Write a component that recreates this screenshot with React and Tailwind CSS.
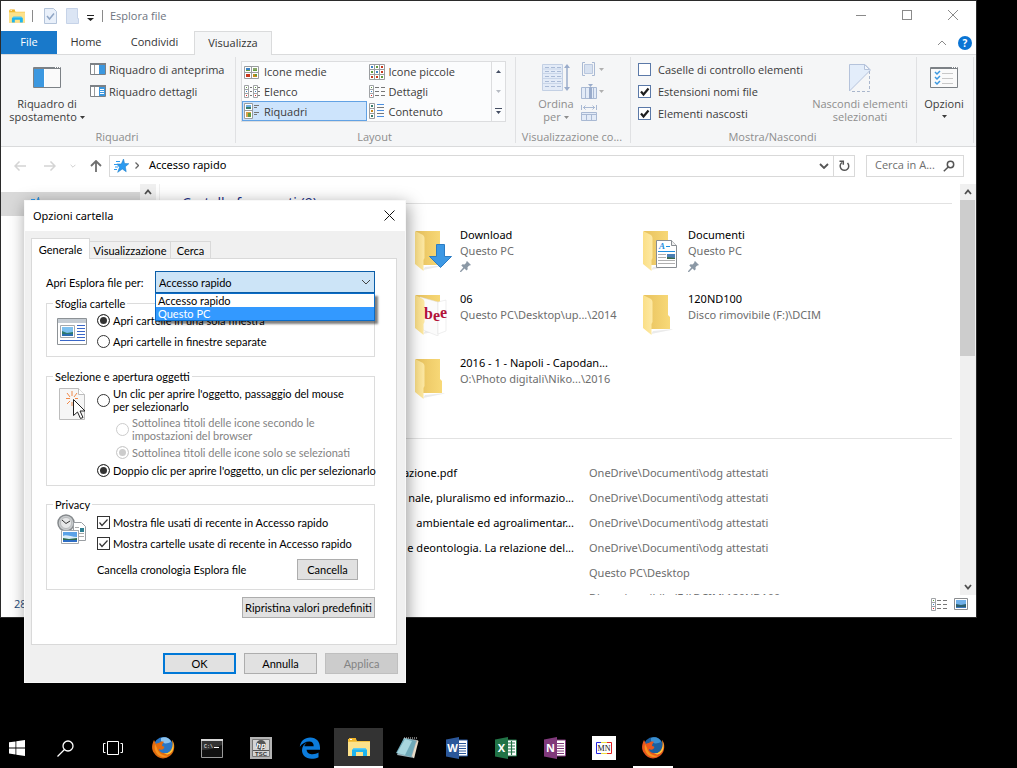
import { useState } from 'react'
import clsx from 'clsx'

const UI = "font-['Open_Sans','Noto_Sans',sans-serif]"
const FILES = "font-['Noto_Sans','Open_Sans',sans-serif]"
const DIALOG = "font-['Lato','Liberation_Sans',sans-serif]"

const GALLERY = [
  { id: 'medie', label: 'Icone medie' },
  { id: 'piccole', label: 'Icone piccole' },
  { id: 'elenco', label: 'Elenco' },
  { id: 'dettagli', label: 'Dettagli' },
  { id: 'riquadri', label: 'Riquadri' },
  { id: 'contenuto', label: 'Contenuto' },
]

const FOLDERS = [
  { name: 'Download', path: 'Questo PC', pinned: true, overlay: 'download' },
  { name: 'Documenti', path: 'Questo PC', pinned: true, overlay: 'document' },
  { name: '06', path: 'Questo PC\\Desktop\\up...\\2014', overlay: 'bee' },
  { name: '120ND100', path: 'Disco rimovibile (F:)\\DCIM' },
  { name: '2016 - 1 - Napoli - Capodan...', path: 'O:\\Photo digitali\\Niko...\\2016' },
]

const RECENT = [
  { name: 'azione.pdf', path: 'OneDrive\\Documenti\\odg attestati', short: true },
  { name: 'nale, pluralismo ed informazio...', path: 'OneDrive\\Documenti\\odg attestati' },
  { name: 'ambientale ed agroalimentar...', path: 'OneDrive\\Documenti\\odg attestati' },
  { name: 'e deontologia. La relazione del...', path: 'OneDrive\\Documenti\\odg attestati' },
  { name: '', path: 'Questo PC\\Desktop' },
  { name: '', path: 'Disco rimovibile (F:)\\DCIM\\120ND100' },
]

/* ---------- icons ---------- */

function ExplorerIcon({ className }) {
  return (
    <svg viewBox="0 0 22 18" className={className} aria-hidden="true">
      <path d="M0 1h8l1 2h13v15H0z" fill="#f5c342" />
      <path d="M1 0h7v3H1z" fill="#f0b429" />
      <path d="M2 1h2v1H2z" fill="#fff" />
      <path d="M0 4h22v14H0z" fill="#fde28b" />
      <path d="M4 18v-6l2-2h11l2 2v6h-4v-4H8v4z" fill="#1fb5ee" />
      <path d="M6 10h11l1.5 1.500H4.500z" fill="#5ccbf5" />
    </svg>
  )
}

function Caret({ className }) {
  return (
    <svg viewBox="0 0 5 3" className={clsx('inline-block h-[3px] w-[5px]', className)} fill="currentColor" aria-hidden="true">
      <path d="M0 0h5L2.500 3z" />
    </svg>
  )
}

function Chevron({ className, up }) {
  return (
    <svg viewBox="0 0 10 6" className={className} fill="none" stroke="currentColor" aria-hidden="true">
      <path d={up ? 'M1 5l4-4 4 4' : 'M1 1l4 4 4-4'} />
    </svg>
  )
}

function NavPaneIcon() {
  return (
    <svg viewBox="0 0 28 21" className="h-[21px] w-7" aria-hidden="true">
      <path d="M.5.5h27v20H.5z" fill="#fafafa" stroke="#7c8186" />
      <path d="M1 0h26v2H1z" fill="#7c8186" />
      <path d="M22 .5h1M24 .5h1M26 .5h1" stroke="#fff" />
      <path d="M1 2h10v18H1z" fill="#3c98e0" />
      <path d="M11 2h1v18h-1z" fill="#fff" />
    </svg>
  )
}

function SmallPaneIcon({ details }) {
  return (
    <svg viewBox="0 0 16 12" className="h-3 w-4 shrink-0" aria-hidden="true">
      <path d="M.5.5h15v11H.5z" fill="#fff" stroke="#7c8186" />
      <path d="M0 0h16v2H0z" fill="#7c8186" />
      <path d="M4.500 2v9" stroke="#9a9da0" />
      <path d="M9 2h6v9H9z" fill="#3c98e0" />
      {details && <path d="M10 4.500h4M10 6.500h4M10 8.500h4" stroke="#fff" />}
    </svg>
  )
}

function GalleryIcon({ id }) {
  const common = { viewBox: '0 0 16 16', className: 'h-4 w-4 shrink-0', fill: 'none', 'aria-hidden': true }
  if (id === 'medie') {
    return (
      <svg {...common}>
        <path d="M.5 2.500h14v12H.5zM7.500 2.500v12M.5 8.500h14" fill="#fff" stroke="#9a9da0" />
        <path d="M2 4h4v3H2z" fill="#3b82c4" />
        <path d="M2 6h4v1H2zM9 6h4v1H9z" fill="#5f9a3f" />
        <path d="M9 4h4v2H9z" fill="#88a86a" />
        <path d="M2 10h4v3H2z" fill="#c8381e" />
        <path d="M9 10h4v3H9z" fill="#c98a1e" />
        <path d="M11 10h2v2h-2z" fill="#5f9a3f" />
      </svg>
    )
  }
  if (id === 'piccole') {
    return (
      <svg {...common}>
        <path d="M.5.5h15v15H.5zM5.500.5v15M10.500.5v15M.5 5.500h15M.5 10.500h15" fill="#fff" stroke="#9a9da0" />
        <path d="M2 2h2v2H2zM7 7h2v2H7z" fill="#3b82c4" />
        <path d="M7 2h2v2H7zM2 7h2v2H2zM12 12h2v2h-2z" fill="#5f9a3f" />
        <path d="M12 2h2v2h-2zM12 7h2v2h-2zM2 12h2v2H2zM7 12h2v2H7z" fill="#c8381e" />
      </svg>
    )
  }
  if (id === 'elenco') {
    return (
      <svg {...common}>
        <path d="M.5 2.500h4v12h-4zM9.500 2.500h4v12h-4zM.5 6.500h4M.5 10.500h4M9.500 6.500h4M9.500 10.500h4" fill="#fff" stroke="#a0a3a6" />
        <path d="M6 4.500h2M6 8.500h2M6 12.500h2M14 4.500h2M14 8.500h2M14 12.500h2" stroke="#777" />
        <path d="M2 4h1v1H2zM11 4h1v1h-1z" fill="#5f9a3f" />
        <path d="M2 8h1v1H2zM11 8h1v1h-1z" fill="#3b82c4" />
        <path d="M2 12h1v1H2zM11 12h1v1h-1z" fill="#e02020" />
      </svg>
    )
  }
  if (id === 'dettagli') {
    return (
      <svg {...common}>
        <path d="M.5 2.500h4v12h-4zM.5 6.500h4M.5 10.500h4" fill="#fff" stroke="#a0a3a6" />
        <path d="M6 4.500h4M6 8.500h4M6 12.500h4M12 4.500h4M12 8.500h4M12 12.500h4" stroke="#777" />
        <path d="M2 4h1v1H2z" fill="#5f9a3f" />
        <path d="M2 8h1v1H2z" fill="#3b82c4" />
        <path d="M2 12h1v1H2z" fill="#e02020" />
      </svg>
    )
  }
  if (id === 'riquadri') {
    return (
      <svg {...common}>
        <path d="M.5.5h8v15h-8zM.5 7.500h8" fill="#fff" stroke="#9a9da0" />
        <path d="M2 2h5v4H2z" fill="#6db0e6" />
        <path d="M2 4h5v2H2z" fill="#3a7d6a" />
        <path d="M2 9h5v5H2z" fill="#d9a24a" />
        <path d="M4 10h3v4H4z" fill="#5f9a3f" />
        <path d="M10 2.500h5M10 4.500h3M10 9.500h5M10 11.500h3" stroke="#777" />
      </svg>
    )
  }
  return (
    <svg {...common}>
      <path d="M.5.5h5v15h-5zM.5 5.500h5M.5 10.500h5" fill="#fff" stroke="#9a9da0" />
      <path d="M2 2h2v2H2zM2 12h2v2H2z" fill="#3a7d6a" />
      <path d="M2 7h2v2H2z" fill="#c98a1e" />
      <path d="M8 1.500h7M8 7.500h7M8 13.500h7" stroke="#4a8fe0" />
      <path d="M8 4.500h7M8 10.500h7" stroke="#777" />
    </svg>
  )
}

function SortIcon() {
  return (
    <svg viewBox="0 0 28 28" className="h-7 w-7" fill="none" aria-hidden="true">
      <path d="M.5.5h20v26H.5z" fill="#e3ebf7" stroke="#c3d0e4" />
      <path d="M1 5h19M1 9.500h19M1 14.500h19M1 19.500h19" stroke="#c9d6e9" />
      <path d="M3 3.500h16M3 7.500h16M3 12.500h16M3 17.500h16M3 22.500h16" stroke="#a9bad6" strokeDasharray="4 2" />
      <path d="M25 2v23" stroke="#9aaccb" strokeWidth="1.500" />
      <path d="M22 4l3-4 3 4zM22 23l3 4 3-4z" fill="#9aaccb" />
    </svg>
  )
}

function GroupByIcon() {
  return (
    <svg viewBox="0 0 16 14" className="h-3.5 w-4" fill="none" aria-hidden="true">
      <path d="M4 .5H1.500v13H4M11 .5h2.500v13H11" stroke="#a9b9d3" />
      <path d="M3.500 2.500h8v9h-8z" fill="#d7e1f0" stroke="#b9c7de" />
    </svg>
  )
}

function AddColumnsIcon() {
  return (
    <svg viewBox="0 0 16 15" className="h-[15px] w-4" fill="none" aria-hidden="true">
      <path d="M.5 3.500h15v11H.5zM4.500 3.500v11M12.500 3.500v11" fill="#e3ebf7" stroke="#a9b9d3" />
      <path d="M8 3h3v12H8z" fill="#9aaccb" />
      <path d="M7 0h5L9.500 3z" fill="#9aaccb" />
    </svg>
  )
}

function FitColumnsIcon() {
  return (
    <svg viewBox="0 0 16 16" className="h-4 w-4" fill="none" stroke="#a9b9d3" aria-hidden="true">
      <path d="M.5 0v5M15.500 0v5M2 2.500h12M4.500.5l-2 2 2 2M11.500.5l2 2-2 2" />
      <path d="M.5 7.500h15v8H.5zM.5 9.500h15M5.500 9.500v6M10.500 9.500v6" fill="#e3ebf7" />
    </svg>
  )
}

function HideItemsIcon() {
  return (
    <svg viewBox="0 0 22 28" className="h-7 w-[22px]" fill="none" aria-hidden="true">
      <path d="M.5.5H16l5 5v1L.5 27z" fill="#e3edfa" stroke="#b5c3db" />
      <path d="M15.500.5v5h5z" fill="#f3f7fc" stroke="#b5c3db" />
      <path d="M20.500 7v20.500H1" stroke="#a9b6cc" strokeDasharray="3 2" />
    </svg>
  )
}

function OptionsIcon() {
  return (
    <svg viewBox="0 0 28 21" className="h-[21px] w-7" fill="none" aria-hidden="true">
      <path d="M.5.5h27v20H.5z" fill="#fafafa" stroke="#7c8186" />
      <path d="M1 0h26v2H1z" fill="#7c8186" />
      <path d="M22 .5h1M24 .5h1M26 .5h1" stroke="#fff" />
      <path d="M5 5l2 2 3-3M5 10l2 2 3-3M5 15l2 2 3-3" stroke="#3c98e0" strokeWidth="1.500" />
      <path d="M12 6.500h11M12 11.500h11M12 16.500h11" stroke="#c8c8c8" />
    </svg>
  )
}

function StarIcon({ className }) {
  return (
    <svg viewBox="0 0 15 14" className={className} aria-hidden="true">
      <path d="M9.500 0l1 4.500 4.300.2-3.500 3 .9 5L8.300 10l-4.600 3.300 1.800-5L2.800 5h4.500z" fill="#2b9af0" stroke="#1c80cc" strokeWidth=".6" />
      <path d="M2 2.500h4M0 5.500h3M1 8h3M0 10.500h3" stroke="#2b9af0" fill="none" />
    </svg>
  )
}

function PinIcon() {
  return (
    <svg viewBox="0 0 11 11" className="h-[11px] w-[11px]" fill="#8b98a5" aria-hidden="true">
      <path d="M7 0l4 4-1.200.6-.6-.1-1.700 1.800.2 2-1.200 1.200-2-2L1 11l-1 0 .2-1L3.300 6.500l-2-2 1.200-1.200 2 .3L6.300 1.800l-.1-.7z" />
    </svg>
  )
}

function FolderIcon({ overlay }) {
  return (
    <svg viewBox="0 0 38 42" className="h-[42px] w-[38px] shrink-0" aria-hidden="true">
      <defs>
        <linearGradient id="folderBack" x1="0" x2="1">
          <stop offset="0" stopColor="#e8c25e" />
          <stop offset="1" stopColor="#f8d978" />
        </linearGradient>
        <linearGradient id="folderFlap" x1="0" x2="1">
          <stop offset="0" stopColor="#fbdf86" />
          <stop offset="1" stopColor="#fde9a5" />
        </linearGradient>
      </defs>
      <path d="M8 40l20-4 2-1-20 2z" fill="#000" opacity=".08" />
      <path d="M1 1h24v20l2 2v12H1z" fill="url(#folderBack)" />
      {overlay === 'bee' && (
        <>
          <path d="M5 3l18 5v34L8 36z" fill="#fbfbfb" stroke="#dedede" strokeWidth=".5" />
          <path d="M23 8l8-2v31l-8 3z" fill="#fff" stroke="#dedede" strokeWidth=".5" />
        </>
      )}
      <path d="M0 1l8 4c1 1 1.500 2 1.500 3v20l-1 2v11L0 34z" fill="url(#folderFlap)" />
      {overlay === 'bee' && (
        <text x="9" y="25" fontSize="16" fontWeight="700" fill="#b3123a" fontFamily="Liberation Serif, serif">
          b<tspan dy="2">e</tspan><tspan dy="-3">e</tspan>
        </text>
      )}
      {overlay === 'download' && (
        <path d="M21.500 14.500h8v12h7L25.500 37.500 14.500 26.500h7z" fill="#3c98e4" stroke="#2b7cc4" />
      )}
      {overlay === 'document' && (
        <>
          <path d="M13.500 10.500h15l5 5v22h-20z" fill="#fff" stroke="#888d92" />
          <path d="M28.500 10.500v5h5" fill="#eee" stroke="#888d92" />
          <text x="16" y="19" fontSize="9" fontStyle="italic" fontWeight="700" fill="#1f8fe0" fontFamily="Liberation Serif, serif">A</text>
          <path d="M23 16.500h4M15 21.500h17" stroke="#1f8fe0" />
          <path d="M15 24.500h8M15 27.500h8M15 30.500h17M15 33.500h17" stroke="#b0b0b0" />
          <path d="M24 24h8v5h-8z" fill="#4a7fb5" />
          <path d="M24 27l8 1v1h-8z" fill="#3d6b4a" />
        </>
      )}
    </svg>
  )
}

/* ---------- explorer window ---------- */

function TitleBar() {
  return (
    <header className="flex h-[30px] items-center pl-2">
      <ExplorerIcon className="h-3.5 w-4" />
      <span className="ml-[7px] h-3 w-px bg-[#8a8a8a]" />
      <button type="button" aria-label="Proprietà" className="ml-[11px]">
        <svg viewBox="0 0 13 16" className="h-4 w-[13px]" fill="none" aria-hidden="true">
          <path d="M.5.5h9l3 3v12H.5z" fill="#e9f0fa" stroke="#b4c4da" />
          <path d="M3 8l2.500 3L10 5.500" stroke="#8fa5c4" strokeWidth="1.500" />
        </svg>
      </button>
      <button type="button" aria-label="Nuova cartella" className="ml-[9px]">
        <svg viewBox="0 0 13 16" className="h-4 w-[13px]" aria-hidden="true">
          <path d="M.5.5h11v10h1v5H.5z" fill="#dbe5f4" stroke="#c6d3e8" />
        </svg>
      </button>
      <button type="button" aria-label="Personalizza barra di accesso rapido" className="ml-2 pt-1">
        <svg viewBox="0 0 7 6" className="h-1.5 w-[7px]" aria-hidden="true">
          <path d="M0 0h7v1H0zM0 3h7L3.500 6z" fill="#222" />
        </svg>
      </button>
      <span className="ml-2 h-3 w-px bg-[#8a8a8a]" />
      <h1 className="ml-[7px] text-[11px] text-[#6d7480]">Esplora file</h1>
      <div className="ml-auto flex items-center gap-9 pr-[18px] pb-0.5 text-[#8a8a8a]">
        <button type="button" aria-label="Riduci a icona" className="flex h-3 w-2.5 items-center">
          <span className="h-px w-full bg-current" />
        </button>
        <button type="button" aria-label="Ingrandisci" className="h-2.5 w-2.5 border border-current" />
        <button type="button" aria-label="Chiudi">
          <svg viewBox="0 0 10 10" className="h-2.5 w-2.5" stroke="currentColor" aria-hidden="true">
            <path d="M0 0l10 10M10 0L0 10" />
          </svg>
        </button>
      </div>
    </header>
  )
}

function RibbonTabs() {
  return (
    <nav className="flex h-6 items-stretch border-b border-[#dadbdc] text-[11px] text-[#333]">
      <button type="button" className="w-14 bg-[#1979ca] text-white">File</button>
      <button type="button" className="w-[58px]">Home</button>
      <button type="button" className="w-[79px]">Condividi</button>
      <button type="button" className="-mb-px w-[78px] border border-b-0 border-[#dadbdc] bg-[#f5f6f7]">Visualizza</button>
      <div className="ml-auto flex items-center gap-[11px] pr-1">
        <button type="button" aria-label="Riduci barra multifunzione">
          <Chevron up className="h-1.5 w-2.5 text-[#8a8a8a]" />
        </button>
        <button type="button" aria-label="Guida" className="flex h-3.5 w-3.5 items-center justify-center rounded-full bg-[#0a74d4] text-[10px] leading-none font-bold text-white">
          ?
        </button>
      </div>
    </nav>
  )
}

function RibbonGroup({ label, className, children }) {
  return (
    <section className={clsx('flex shrink-0 flex-col border-r border-[#e0e1e3]', className)}>
      <div className="flex flex-1">{children}</div>
      <h2 className="h-[13px] pr-0.5 text-center text-[11px] leading-[13px] text-[#8d8d8d]">{label}</h2>
    </section>
  )
}

function RibbonCheck({ label, defaultChecked }) {
  return (
    <label className="flex h-[22px] items-center gap-[7px]">
      <span className="relative h-[13px] w-[13px]">
        <input type="checkbox" defaultChecked={defaultChecked} className="peer block h-[13px] w-[13px] appearance-none border border-[#5b79a8] bg-white" />
        <svg viewBox="0 0 13 13" className="pointer-events-none absolute inset-0 hidden h-[13px] w-[13px] peer-checked:block" fill="none" stroke="#1e1e1e" strokeWidth="2.200" aria-hidden="true">
          <path d="M3 6.500l2.500 3 5-6" />
        </svg>
      </span>
      {label}
    </label>
  )
}

function Ribbon() {
  const [view, setView] = useState('riquadri')

  return (
    <div className="flex h-[92px] overflow-hidden border-b border-[#dadbdc] bg-[#f5f6f7] pt-0.5 pb-[3px] text-[11px] leading-[13px] text-[#3b3b3b]">
      <RibbonGroup label="Riquadri" className="w-[235px]">
        <button type="button" className="mt-2.5 ml-1.5 flex w-20 flex-col items-center self-start">
          <NavPaneIcon />
          <span className="mt-[9px]">Riquadro di<br />spostamento <Caret className="mb-0.5" /></span>
        </button>
        <div className="mt-px ml-[3px] flex flex-col">
          <button type="button" className="flex h-[22px] items-center gap-[3px]"><SmallPaneIcon />Riquadro di anteprima</button>
          <button type="button" className="flex h-[22px] items-center gap-[3px]"><SmallPaneIcon details />Riquadro dettagli</button>
        </div>
      </RibbonGroup>

      <RibbonGroup label="Layout" className="w-[280px]">
        <div className="mt-1 ml-[5px] flex h-[61px] w-[265px] border border-[#dcdddf] bg-[#fbfcfd]">
          <div className="grid flex-1 grid-cols-2 grid-rows-3">
            {GALLERY.map((item) => (
              <button
                key={item.id}
                type="button"
                onClick={() => setView(item.id)}
                className={clsx(
                  'flex items-center gap-1 border pl-px',
                  view === item.id ? 'border-[#62a2e4] bg-[#cde4fc]' : 'border-transparent'
                )}
              >
                <GalleryIcon id={item.id} />
                {item.label}
              </button>
            ))}
          </div>
          <div className="flex w-3.5 flex-col items-center border-l border-[#dcdddf]">
            <button type="button" aria-label="Su" className="flex flex-1 items-center"><Caret className="rotate-180 text-[#444e63]" /></button>
            <button type="button" aria-label="Giù" className="flex flex-1 items-center"><Caret className="text-[#b5bac2]" /></button>
            <button type="button" aria-label="Altro" className="flex flex-1 items-center">
              <svg viewBox="0 0 7 6" className="h-1.5 w-[7px]" aria-hidden="true">
                <path d="M0 0h7v1H0zM1 3h5L3.500 6z" fill="#444e63" />
              </svg>
            </button>
          </div>
        </div>
      </RibbonGroup>

      <RibbonGroup label="Visualizzazione co..." className="w-[115px]">
        <button type="button" disabled className="mt-[7px] ml-5 flex w-10 flex-col items-center self-start text-[#8d8d8d]">
          <SortIcon />
          <span className="mt-[5px]">Ordina<br />per <Caret className="mb-0.5" /></span>
        </button>
        <div className="mt-px ml-[5px] flex flex-col text-[#b0b0b0]">
          <button type="button" disabled aria-label="Raggruppa per" className="flex h-[22px] items-center gap-0.5"><GroupByIcon /><Caret /></button>
          <button type="button" disabled aria-label="Aggiungi colonne" className="flex h-[22px] items-center gap-0.5"><AddColumnsIcon /><Caret /></button>
          <button type="button" disabled aria-label="Adatta colonne" className="flex h-[22px] items-center"><FitColumnsIcon /></button>
        </div>
      </RibbonGroup>

      <RibbonGroup label="Mostra/Nascondi" className="w-[286px]">
        <div className="mt-px ml-[7px] flex flex-col">
          <RibbonCheck label="Caselle di controllo elementi" />
          <RibbonCheck label="Estensioni nomi file" defaultChecked />
          <RibbonCheck label="Elementi nascosti" defaultChecked />
        </div>
        <button type="button" disabled className="mt-[7px] mr-[5px] ml-auto flex w-[102px] flex-col items-center self-start text-[#8d8d8d]">
          <HideItemsIcon />
          <span className="mt-[5px]">Nascondi elementi<br />selezionati</span>
        </button>
      </RibbonGroup>

      <RibbonGroup className="w-[57px]">
        <button type="button" className="mt-2.5 flex w-full flex-col items-center self-start pr-0.5">
          <OptionsIcon />
          <span className="mt-[9px]">Opzioni</span>
          <Caret className="mt-[5px]" />
        </button>
      </RibbonGroup>
    </div>
  )
}

function AddressRow() {
  return (
    <div className="flex h-[37px] items-center pr-3 pl-[13px] text-[11px]">
      <button type="button" disabled aria-label="Indietro" className="text-[#d4d4d4]">
        <svg viewBox="0 0 12 10" className="h-2.5 w-3" fill="none" stroke="currentColor" strokeWidth="1.500" aria-hidden="true"><path d="M12 5H1M5.500.5L1 5l4.500 4.500" /></svg>
      </button>
      <button type="button" disabled aria-label="Avanti" className="ml-[18px] text-[#d4d4d4]">
        <svg viewBox="0 0 12 10" className="h-2.5 w-3" fill="none" stroke="currentColor" strokeWidth="1.500" aria-hidden="true"><path d="M0 5h11M6.500.5L11 5 6.500 9.500" /></svg>
      </button>
      <button type="button" disabled aria-label="Percorsi recenti" className="ml-3.5 text-[#b0b0b0]">
        <Chevron className="h-1 w-1.5" />
      </button>
      <button type="button" aria-label="Su" className="ml-3.5 text-[#6f6f6f]">
        <svg viewBox="0 0 12 12" className="h-3 w-3" fill="none" stroke="currentColor" strokeWidth="1.800" aria-hidden="true"><path d="M6 12V1.500M1 6l5-5 5 5" /></svg>
      </button>
      <div className="ml-[7px] flex h-[22px] flex-1 items-center border border-[#d9d9d9] pl-1">
        <StarIcon className="h-3.5 w-[15px]" />
        <svg viewBox="0 0 4 7" className="ml-1.5 h-[7px] w-1" fill="none" stroke="#666" strokeWidth="1.300" aria-hidden="true"><path d="M.5.5l3 3-3 3" /></svg>
        <span className={clsx('ml-2.5 text-black', FILES)}>Accesso rapido</span>
        <button type="button" aria-label="Percorsi precedenti" className="mr-1 ml-auto text-[#555]">
          <svg viewBox="0 0 10 6" className="h-1.5 w-2.5" fill="none" stroke="currentColor" strokeWidth="1.800" aria-hidden="true"><path d="M1 1l4 4 4-4" /></svg>
        </button>
        <button type="button" aria-label="Aggiorna" className="flex h-full w-[21px] items-center justify-center border-l border-[#d9d9d9] text-[#555]">
          <svg viewBox="0 0 11 12" className="h-3 w-[11px]" fill="none" stroke="currentColor" strokeWidth="1.500" aria-hidden="true"><path d="M3 2.500A4.300 4.300 0 1 0 8.500 3M0.500 1.200h3.800v3.600" /></svg>
        </button>
      </div>
      <div className="ml-[11px] flex h-[22px] w-[98px] items-center border border-[#d9d9d9] pl-2">
        <input type="text" aria-label="Cerca in Accesso rapido" placeholder="Cerca in A..." className="w-[68px] outline-none placeholder:text-[#6d6d6d]" />
        <svg viewBox="0 0 12 12" className="h-3 w-3" fill="none" stroke="#555" strokeWidth="1.500" aria-hidden="true"><circle cx="7.500" cy="4.500" r="3.200" /><path d="M5.200 7L.8 11.200" /></svg>
      </div>
    </div>
  )
}

function ScrollArrow({ up }) {
  return (
    <span className="flex h-4 w-4 items-center justify-center text-[#505050]">
      <svg viewBox="0 0 8 6" className="h-1.5 w-2" fill="none" stroke="currentColor" strokeWidth="1.800" aria-hidden="true">
        <path d={up ? 'M1 5l3-3.500L7 5' : 'M1 1l3 3.500L7 1'} />
      </svg>
    </span>
  )
}

function FileArea() {
  return (
    <div className="flex min-h-0 flex-1">
      <aside className="flex w-[159px] shrink-0 border-r border-[#f0f0f0]">
        <div className="flex-1 pt-2">
          <a href="#accesso" className="flex h-6 items-center gap-0.5 bg-[#d9d9d9] pl-7 text-[11px] text-black">
            <StarIcon className="h-3.5 w-[15px]" />
            Accesso rapido
          </a>
        </div>
        <div className="mr-[3px] w-4 bg-[#f0f0f0]"><ScrollArrow up /></div>
      </aside>

      <main className={clsx('min-w-0 flex-1 overflow-hidden text-[11px] leading-4', FILES)}>
        <div className="flex items-center gap-1.5 pt-2 pr-2 pl-1.5">
          <Chevron className="h-1.5 w-2.5 text-[#555]" />
          <h2 className="text-[14px] leading-[22px] text-[#1e3287]">Cartelle frequenti (9)</h2>
          <span className="h-px flex-1 bg-[#e2e2e2]" />
        </div>
        <ul className="grid grid-cols-[228px_228px] pt-[13px] pl-[255px]">
          {FOLDERS.map((folder) => (
            <li key={folder.name} className="flex h-16 items-start gap-[7px]">
              <div className="pt-[3px]"><FolderIcon overlay={folder.overlay} /></div>
              <div className="min-w-0 whitespace-nowrap">
                <p className="text-black">{folder.name}</p>
                <p className="text-[#6d6d6d]">{folder.path}</p>
                {folder.pinned && <div className="pt-0.5"><PinIcon /></div>}
              </div>
            </li>
          ))}
        </ul>
        <div className="mt-[19px] mr-2 h-px bg-[#e2e2e2]" />
        <ul className="pt-[21px]">
          {RECENT.map((file, i) => (
            <li key={i} className="flex h-[25px] items-center whitespace-nowrap">
              <span className={clsx('flex w-[414px] shrink-0 justify-end text-black', file.short && 'pr-[117px]')}>{file.name}</span>
              <span className="pl-[15px] text-[#6d6d6d]">{file.path}</span>
            </li>
          ))}
        </ul>
      </main>

      <div className="flex w-4 shrink-0 flex-col bg-[#f0f0f0]">
        <ScrollArrow up />
        <span className="h-[38%] w-[15px] bg-[#cdcdcd]" />
        <span className="mt-auto"><ScrollArrow /></span>
      </div>
    </div>
  )
}

function StatusBar() {
  return (
    <footer className="flex h-[22px] items-center pr-2 pb-1 pl-[13px] text-[11px] text-[#1e4a7a]">
      28 elementi
      <div className="ml-auto flex items-center gap-[7px]">
        <button type="button" aria-label="Dettagli"><GalleryIcon id="dettagli" /></button>
        <button type="button" aria-label="Icone grandi">
          <svg viewBox="0 0 14 12" className="h-3 w-3.5" aria-hidden="true">
            <path d="M.5.5h13v11H.5z" fill="#fff" stroke="#8a8d90" />
            <path d="M2 2h10v8H2z" fill="#6fb0ea" />
            <path d="M2 6l5 1 5-1v4H2z" fill="#2c5f6e" />
            <path d="M2 9h10v1H2z" fill="#3c78c0" />
          </svg>
        </button>
      </div>
    </footer>
  )
}

/* ---------- folder options dialog ---------- */

function Radio({ label, className, ...props }) {
  return (
    <label className={clsx('flex items-center gap-[3px]', props.disabled && 'text-[#838383]', className)}>
      <input
        type="radio"
        className="h-[13px] w-[13px] shrink-0 appearance-none rounded-full border border-[#333] bg-white checked:bg-[#333] checked:shadow-[inset_0_0_0_2px_#fff] disabled:border-[#ccc] disabled:checked:bg-[#ccc]"
        {...props}
      />
      <span>{label}</span>
    </label>
  )
}

function Check({ label, className }) {
  return (
    <label className={clsx('flex items-center gap-[3px]', className)}>
      <span className="relative h-[13px] w-[13px]">
        <input type="checkbox" defaultChecked className="peer block h-[13px] w-[13px] appearance-none border border-[#333] bg-white" />
        <svg viewBox="0 0 13 13" className="pointer-events-none absolute inset-0 hidden h-[13px] w-[13px] peer-checked:block" fill="none" stroke="#333" strokeWidth="1.200" aria-hidden="true">
          <path d="M2.500 6.500L5 9.500l5.500-6" />
        </svg>
      </span>
      {label}
    </label>
  )
}

function Group({ title, className, children }) {
  return (
    <fieldset className={clsx('min-w-0 border border-[#dcdcdc]', className)}>
      <legend className="ml-1.5 px-0.5">{title}</legend>
      {children}
    </fieldset>
  )
}

function DialogButton({ className, children, ...props }) {
  return (
    <button
      type="button"
      className={clsx('h-[21px] border disabled:border-[#bfbfbf] disabled:bg-[#ccc] disabled:text-[#838383]', className)}
      {...props}
    >
      {children}
    </button>
  )
}

function BrowseIcon() {
  return (
    <svg viewBox="0 0 30 27" className="h-[27px] w-[30px]" aria-hidden="true">
      <path d="M.5.5h29v26H.5z" fill="#fff" stroke="#8d9296" />
      <path d="M1 1h28v4H1z" fill="#c5ccd3" />
      <path d="M3.500 7.500h14v12h-14z" fill="#fff" stroke="#a5a9ad" />
      <path d="M5 9h11v9H5z" fill="#7dc0ef" />
      <path d="M5 13l5 2 6-1v4H5z" fill="#2e7a6e" />
      <path d="M5 16h11v2H5z" fill="#2a6db0" />
      <path d="M20 7.500h8M20 10.500h8M20 13.500h8M20 16.500h8M20 19.500h8M3 22.500h25" stroke="#3a67c8" />
    </svg>
  )
}

function ClickIcon() {
  return (
    <svg viewBox="0 0 28 33" className="h-[33px] w-7" aria-hidden="true">
      <path d="M.5.5h19l6 6v25H.5z" fill="#f6f6f6" stroke="#bdbdbd" />
      <path d="M19.500.5v6h6" fill="#fff" stroke="#bdbdbd" />
      <path d="M13 3v5M8 5l3 4M18 5l-3 4M7 10.500h4M8 16l3-3M13 14v4M19 10.500h-3" stroke="#f08a4b" fill="none" />
      <path d="M14.500 11.500v16l4-3.500 3 6.500 2.500-1-3-6.500h5z" fill="#fff" stroke="#222" />
    </svg>
  )
}

function PrivacyIcon() {
  return (
    <svg viewBox="0 0 29 31" className="h-[31px] w-[29px]" aria-hidden="true">
      <circle cx="9" cy="9" r="8" fill="#c8cbcd" stroke="#85898c" strokeWidth="1.500" />
      <circle cx="9" cy="9" r="5.500" fill="#e6e7e8" stroke="#a3a6a8" strokeWidth=".6" />
      <path d="M5 6l4 3.500L13 7" stroke="#333" fill="none" />
      <path d="M16.500 8.500h8l4 4v14h-12z" fill="#fff" stroke="#9a9ea2" />
      <path d="M18 13.500h4M18 16.500h4M18 19.500h9M22 22.500h5" stroke="#aaa" />
      <path d="M23 14h4v4h-4z" fill="#2d7f92" />
      <path d="M4.500 16.500h17v13h-17z" fill="#fff" stroke="#a5a9ad" />
      <path d="M6 18h14v10H6z" fill="#5aa2e8" />
      <path d="M6 22c3-2 8 1 14 1v2H6z" fill="#d8ecfa" />
      <path d="M6 24l6 1 8-1v2H6z" fill="#2f6b4f" />
      <path d="M6 26h14v2H6z" fill="#2d6dc4" />
    </svg>
  )
}

function FolderOptions() {
  return (
    <div
      role="dialog"
      aria-labelledby="dialog-title"
      className={clsx('absolute top-[200px] left-6 w-[382px] border border-[#f8f8f8] bg-[#f0f0f0] text-[11px] leading-[13px] text-black shadow-[2px_4px_16px_rgba(0,0,0,0.4)]', DIALOG)}
    >
      <div className="flex h-[30px] items-center justify-between bg-white pr-2.5 pb-0.5 pl-2">
        <h2 id="dialog-title" className={FILES}>Opzioni cartella</h2>
        <button type="button" aria-label="Chiudi">
          <svg viewBox="0 0 11 11" className="h-[11px] w-[11px]" stroke="#111" aria-hidden="true">
            <path d="M.5.5l10 10M10.500.5l-10 10" />
          </svg>
        </button>
      </div>

      <div className="flex items-end pt-[7px] pl-1.5" role="tablist">
        <button type="button" role="tab" aria-selected="true" className="relative -mb-px h-[21px] w-[59px] border border-b-0 border-[#d9d9d9] bg-white">Generale</button>
        <button type="button" role="tab" aria-selected="false" className="h-[17px] w-[81px] border border-b-0 border-l-0 border-[#d9d9d9]">Visualizzazione</button>
        <button type="button" role="tab" aria-selected="false" className="h-[17px] w-10 border border-b-0 border-l-0 border-[#d9d9d9]">Cerca</button>
      </div>

      <div className="mx-1.5 mr-2 flex flex-col border border-[#d9d9d9] bg-white pt-3 pr-[21px] pb-[26px] pl-3.5">
        <div className="relative flex items-center justify-between">
          <label htmlFor="open-to">Apri Esplora file per:</label>
          <div className="relative">
            <select id="open-to" className="block h-[22px] w-[220px] appearance-none border border-[#0a5da8] bg-[#cce4f7] pl-[3px]">
              <option>Accesso rapido</option>
              <option>Questo PC</option>
            </select>
            <Chevron className="pointer-events-none absolute top-2 right-1 h-1.5 w-2.5 text-[#444]" />
            <ul role="listbox" aria-label="Apri Esplora file per" className="absolute top-full left-0 z-10 w-full border border-[#0a6cc8] bg-white shadow-[3px_3px_2px_rgba(0,0,0,0.5)]">
              <li role="option" aria-selected="false" className="h-[13px] pl-0.5">Accesso rapido</li>
              <li role="option" aria-selected="true" className="h-[13px] bg-[#3399ff] pl-0.5 text-white">Questo PC</li>
            </ul>
          </div>
        </div>

        <Group title="Sfoglia cartelle" className="mt-1">
          <div className="flex gap-2.5 pb-1 pl-2.5">
            <div className="pt-2"><BrowseIcon /></div>
            <div>
              <Radio name="browse" defaultChecked label="Apri cartelle in una sola finestra" className="h-[21px]" />
              <Radio name="browse" label="Apri cartelle in finestre separate" className="h-[21px]" />
            </div>
          </div>
        </Group>

        <Group title="Selezione e apertura oggetti" className="mt-[13px]">
          <div className="flex pb-2 pl-3">
            <div className="w-[38px] shrink-0 pt-[5px]"><ClickIcon /></div>
            <div className="pt-1 whitespace-nowrap">
              <Radio name="click" label={<>Un clic per aprire l'oggetto, passaggio del mouse<br />per selezionarlo</>} />
              <div className="ml-[19px] pt-[3px]">
                <Radio name="underline" disabled label={<>Sottolinea titoli delle icone secondo le<br />impostazioni del browser</>} />
                <Radio name="underline" disabled defaultChecked label="Sottolinea titoli delle icone solo se selezionati" className="mt-1" />
              </div>
              <Radio name="click" defaultChecked label="Doppio clic per aprire l'oggetto, un clic per selezionarlo" className="mt-[5px]" />
            </div>
          </div>
        </Group>

        <Group title="Privacy" className="mt-3">
          <div className="flex gap-[11px] pt-px pr-4 pb-[9px] pl-2.5">
            <div className="pt-0.5"><PrivacyIcon /></div>
            <div className="flex-1">
              <Check label="Mostra file usati di recente in Accesso rapido" className="h-[21px]" />
              <Check label="Mostra cartelle usate di recente in Accesso rapido" className="h-[21px]" />
              <div className="flex items-center justify-between pt-[5px]">
                <span>Cancella cronologia Esplora file</span>
                <DialogButton className="w-[61px] border-[#adadad] bg-[#e1e1e1]">Cancella</DialogButton>
              </div>
            </div>
          </div>
        </Group>

        <DialogButton className="mt-[7px] w-[133px] self-end border-[#adadad] bg-[#e1e1e1]">Ripristina valori predefiniti</DialogButton>
      </div>

      <div className="flex justify-end gap-2 pt-2 pr-[7px] pb-2">
        <DialogButton className="w-[73px] border-2 border-[#0078d7] bg-[#e1e1e1]">OK</DialogButton>
        <DialogButton className="w-[73px] border-[#adadad] bg-[#e1e1e1]">Annulla</DialogButton>
        <DialogButton disabled className="w-[73px]">Applica</DialogButton>
      </div>
    </div>
  )
}

/* ---------- taskbar ---------- */

function FirefoxIcon({ modern }) {
  return (
    <svg viewBox="0 0 24 24" className="h-6 w-6" aria-hidden="true">
      <circle cx="12.500" cy="11" r="10" fill={modern ? '#1d5f9e' : '#2a76c4'} />
      <path d="M10 2c4-2 9 0 10 4-3 1-7 3-10-1z" fill={modern ? '#3a8fd0' : '#8cc3ee'} />
      <path d="M3 4c-2 4-3 9 0 13 3 5 9 7 14 4 5-2 7-8 6-13-.5-2-1-3-2-4 1 3 1 6 0 8-1 4-5 6-8 5-3 0-5-2-5-4 2 1 4 1 5-1 1-1 0-2-2-2 0-2 1-3 2-4-2-1-4 0-5 1-1 0-2 0-3 1z" fill={modern ? '#e8561e' : '#e06a10'} />
      <path d="M21 4c1 3 1 6 0 8-1 4-5 6-8 5 3 3 7 1 9-3 1-3 1-7-1-10z" fill="#ffc83a" />
      <path d="M4 8c-1 4 0 8 3 11 3 2 7 3 10 1-5 0-10-3-11-8z" fill="#f7931e" />
    </svg>
  )
}

function OfficeIcon({ letter, color, kind }) {
  return (
    <svg viewBox="0 0 22 22" className="h-[22px] w-[22px]" aria-hidden="true">
      <path d="M12 3h9.500v16H12z" fill="#fff" stroke={color} />
      {kind === 'grid'
        ? <path d="M13 6h7M13 9h7M13 12h7M13 15h7M16.500 4v14" stroke={color} strokeWidth="1.200" />
        : <path d="M13 6.500h7M13 9h7M13 11.500h7M13 14h7M13 16.500h7" stroke={color} />}
      <path d="M0 2.500L13 0v22L0 19.500z" fill={color} />
      <text x="6.500" y="15" textAnchor="middle" fontSize="11" fontWeight="700" fill="#fff" fontFamily="Open Sans, sans-serif">{letter}</text>
    </svg>
  )
}

const TASKS = [
  { label: 'Mozilla Firefox', icon: <FirefoxIcon /> },
  {
    label: 'Prompt dei comandi',
    icon: (
      <svg viewBox="0 0 22 19" className="h-[19px] w-[22px]" aria-hidden="true">
        <path d="M.5.5h21v18H.5z" fill="#111" stroke="#9a9a9a" />
        <path d="M0 0h22v2H0z" fill="#d8d8d8" />
        <path d="M1 11C8 11 14 9 21 6V2H1z" fill="#333" />
        <text x="3" y="8.500" fontSize="5" fill="#fff" fontFamily="Liberation Mono, monospace">C:\</text>
        <path d="M13 8.500h5" stroke="#fff" />
      </svg>
    ),
  },
  {
    label: 'HP TSC',
    icon: (
      <svg viewBox="0 0 22 22" className="h-[22px] w-[22px]" aria-hidden="true">
        <path d="M0 0h22v22H0z" fill="#b4b4b4" />
        <path d="M2.500 2.500h17v17h-17z" fill="#d4d4d4" stroke="#777" />
        <circle cx="11" cy="8" r="5" fill="#555" />
        <text x="11" y="11" textAnchor="middle" fontSize="8" fontStyle="italic" fontWeight="700" fill="#fff" fontFamily="Liberation Sans, sans-serif">hp</text>
        <path d="M3 13h16v1H3z" fill="#555" />
        <text x="11" y="19" textAnchor="middle" fontSize="6" fontWeight="700" fill="#333" fontFamily="Liberation Sans, sans-serif">TSC</text>
      </svg>
    ),
  },
  {
    label: 'Microsoft Edge',
    icon: (
      <svg viewBox="0 0 22 22" className="h-[22px] w-[22px]" aria-hidden="true">
        <path d="M.8 9.800C1.500 4 5.600.5 11.200.5c6.200 0 9.800 4.300 9.800 10v2.200H7.600c.3 3.300 3 4.600 5.900 4.600 2.300 0 4.300-.6 6-1.700v4.600c-2 1-4.500 1.500-7 1.500-6 0-9.500-3.700-9.500-8.500 0-3.600 2-6.500 5.300-8C6 7 5.500 8.500 5.400 9.200h9.300c0-2.800-1.400-4.600-4.400-4.600-3.700 0-7.200 2-9.500 5.200z" fill="#0c7cdc" />
      </svg>
    ),
  },
  { label: 'Esplora file', icon: <ExplorerIcon className="h-[18px] w-[22px]" />, active: true },
  {
    label: 'Blocco note',
    icon: (
      <svg viewBox="0 0 23 22" className="h-[22px] w-[23px]" aria-hidden="true">
        <path d="M8 1l13 2-3 18-17-3z" fill="#9fb0b8" />
        <path d="M8 1l12 3-5 16-15-4z" fill="#6fa9b8" />
        <path d="M9 2l7 2L9 18l-8-2z" fill="#a8d6de" />
        <path d="M16 19l5-16 1.500 1L18 21.500z" fill="#e8dcc8" />
        <path d="M8 1h13" stroke="#ddd" strokeDasharray="1 1" />
      </svg>
    ),
  },
  { label: 'Word', icon: <OfficeIcon letter="W" color="#2b579a" /> },
  { label: 'Excel', icon: <OfficeIcon letter="X" color="#217346" kind="grid" /> },
  { label: 'OneNote', icon: <OfficeIcon letter="N" color="#80397b" /> },
  {
    label: 'MN',
    icon: (
      <svg viewBox="0 0 24 24" className="h-6 w-6" aria-hidden="true">
        <path d="M0 0h24v24H0z" fill="#fff" />
        <path d="M9 6.500H4.500v11H9" fill="none" stroke="#2020e0" />
        <path d="M15 6.500h4.500v11H15" fill="none" stroke="#e02020" />
        <path d="M9 6.500h6M9 17.500h6" stroke="#f0e040" />
        <text x="12" y="15" textAnchor="middle" fontSize="8" fill="#111" fontFamily="Liberation Serif, serif">MN</text>
      </svg>
    ),
  },
  { label: 'Firefox', icon: <FirefoxIcon modern />, running: true },
]

function Taskbar() {
  return (
    <nav aria-label="Barra delle applicazioni" className="flex h-10 bg-black">
      <button type="button" aria-label="Start" className="flex w-[41px] items-center pl-[9px]">
        <svg viewBox="0 0 16 16" className="h-4 w-4" fill="#fff" aria-hidden="true">
          <path d="M0 2.300l6.500-.9v6.100H0zM7.300 1.300L16 0v7.500H7.300zM0 8.400h6.500v6.100L0 13.600zM7.300 8.400H16V16l-8.700-1.300z" />
        </svg>
      </button>
      <button type="button" aria-label="Cerca" className="flex w-12 items-center justify-center">
        <svg viewBox="0 0 17 17" className="h-[17px] w-[17px]" fill="none" stroke="#fff" strokeWidth="1.300" aria-hidden="true">
          <circle cx="11" cy="6" r="5" /><path d="M7.500 9.500L.5 16.500" />
        </svg>
      </button>
      <button type="button" aria-label="Visualizzazione attività" className="flex w-12 items-center justify-center">
        <svg viewBox="0 0 20 14" className="h-3.5 w-5" fill="none" stroke="#fff" aria-hidden="true">
          <path d="M4.500.5h11v13h-11zM2.500 2.500h-2v9h2M17.500 2.500h2v9h-2" />
        </svg>
      </button>
      <div className="ml-px flex">
        {TASKS.map((task) => (
          <button
            key={task.label}
            type="button"
            aria-label={task.label}
            className={clsx('relative flex w-[49px] items-center justify-center', task.active && 'border-b-2 border-white bg-[#333]')}
          >
            {task.icon}
            {task.running && <span className="absolute bottom-0 h-0.5 w-10 bg-white" />}
          </button>
        ))}
      </div>
    </nav>
  )
}

export default function App() {
  return (
    <div className={clsx('relative flex h-screen flex-col overflow-hidden bg-black', UI)}>
      <div className="mr-10 mb-[110px] flex min-h-0 flex-1 flex-col border border-[#2b2b2b] bg-white">
        <TitleBar />
        <RibbonTabs />
        <Ribbon />
        <AddressRow />
        <FileArea />
        <StatusBar />
      </div>
      <FolderOptions />
      <Taskbar />
    </div>
  )
}
